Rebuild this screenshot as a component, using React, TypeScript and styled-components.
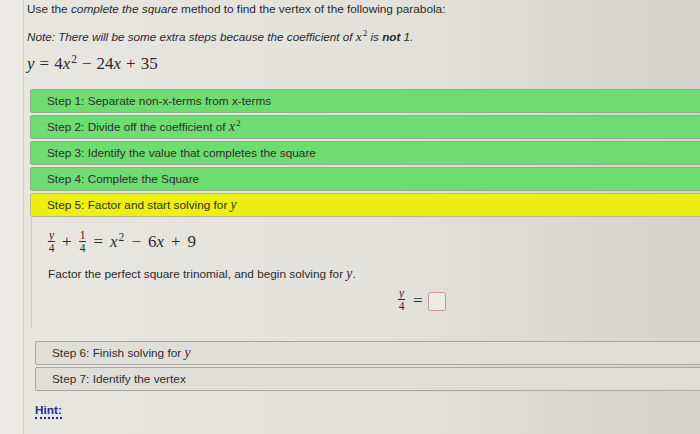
import React from "react";
import styled, { createGlobalStyle } from "styled-components";

const Global = createGlobalStyle`
  html, body { margin: 0; padding: 0; }
  body {
    width: 700px;
    height: 434px;
    overflow: hidden;
    background: #e4e2dd;
    font-family: "Liberation Sans", Arial, sans-serif;
    color: #2a2a2a;
  }
`;

const Page = styled.div`
  height: 434px;
  background: linear-gradient(90deg, #e8e6e1 0%, #e3e1dc 55%, #d6d2cc 100%);
  display: flex;
`;

const Gutter = styled.div`
  width: 23px;
  flex: none;
  border-right: 1px solid #cfccc6;
  background: rgba(255, 255, 255, 0.18);
`;

const Main = styled.div`
  flex: 1;
  padding: 0 0 0 3px;
  margin-right: -12px;
  display: flex;
  flex-direction: column;
`;

const Prompt = styled.p`
  margin: 0;
  font-size: 11.8px;
  line-height: 18px;
`;

const Note = styled.p`
  margin: 10px 0 0 0;
  font-size: 11.7px;
  line-height: 18px;
  font-style: italic;
`;

const Math = styled.span`
  font-family: "Liberation Serif", "Times New Roman", serif;
  font-style: italic;
  font-size: 1.15em;
`;

const Sup = styled.sup`
  font-size: 0.68em;
  font-style: normal;
  line-height: 0;
  vertical-align: 0.55em;
  margin-left: 1px;
`;

const Bold = styled.b`
  font-weight: bold;
`;

const Equation = styled.div`
  margin: 7px 0 0 0;
  font-family: "Liberation Serif", "Times New Roman", serif;
  font-size: 17px;
  line-height: 22px;
  white-space: nowrap;
`;

const Op = styled.span<{ $wide?: boolean }>`
  font-style: normal;
  padding: 0 ${(p) => (p.$wide ? 7 : 5)}px;
`;

const It = styled.span`
  font-style: italic;
`;

const Steps = styled.div`
  margin-top: 14px;
  margin-left: 3px;
  display: flex;
  flex-direction: column;
  gap: 2px;
`;

const StepBar = styled.div<{ $tone: "green" | "yellow" | "gray" }>`
  height: 24px;
  box-sizing: border-box;
  display: flex;
  align-items: center;
  padding-left: 16px;
  font-size: 11.8px;
  border-radius: 2px;
  color: #2e2e2e;
  background: ${(p) =>
    p.$tone === "green" ? "#6edc70" : p.$tone === "yellow" ? "#eeee12" : "#e0ded9"};
  border: 1px solid
    ${(p) => (p.$tone === "green" ? "#93ac8c" : p.$tone === "yellow" ? "#b8b88a" : "#a9a7a2")};
`;

const Panel = styled.div`
  margin-left: 4px;
  margin-top: -2px;
  border-left: 1px solid #d0cdc7;
  padding: 16px 0 0 16px;
  height: 114px;
  box-sizing: border-box;
  display: flex;
  flex-direction: column;
`;

const WorkLine = styled.div`
  font-family: "Liberation Serif", "Times New Roman", serif;
  font-size: 17px;
  line-height: 22px;
  white-space: nowrap;
`;

const Frac = styled.span`
  display: inline-flex;
  flex-direction: column;
  align-items: center;
  font-size: 11.5px;
  line-height: 10px;
  vertical-align: middle;
  position: relative;
  top: -2px;
`;

const Num = styled.span`
  padding: 0 1px 1px;
  border-bottom: 1px solid #333;
`;

const Den = styled.span`
  padding-top: 1px;
`;

const Instruction = styled.p`
  margin: 11px 0 0 0;
  font-size: 11.8px;
  line-height: 16px;
`;

const AnswerRow = styled.div`
  margin: 8px 0 0 350px;
  font-family: "Liberation Serif", "Times New Roman", serif;
  font-size: 17px;
  line-height: 22px;
  white-space: nowrap;
`;

const AnswerBox = styled.span`
  display: inline-block;
  width: 16px;
  height: 17px;
  vertical-align: middle;
  border: 1.5px solid #c79a98;
  border-radius: 3px;
  background: #eeebe7;
`;

const EqOp = styled.span`
  padding: 0 5px 0 8px;
`;

const LowerSteps = styled.div`
  margin-top: 12px;
  margin-left: 8px;
  display: flex;
  flex-direction: column;
  gap: 2px;
`;

const Hint = styled.span`
  margin: 13px 0 0 8px;
  align-self: flex-start;
  font-size: 11.8px;
  font-weight: bold;
  color: #27279a;
  border-bottom: 2px dotted #27279a;
  line-height: 13px;
`;

const steps: { label: React.ReactNode; tone: "green" | "yellow" }[] = [
  { label: "Step 1: Separate non-x-terms from x-terms", tone: "green" },
  {
    label: (
      <>
        Step 2: Divide off the coefficient of&nbsp;
        <Math>
          x<Sup>2</Sup>
        </Math>
      </>
    ),
    tone: "green",
  },
  { label: "Step 3: Identify the value that completes the square", tone: "green" },
  { label: "Step 4: Complete the Square", tone: "green" },
  {
    label: (
      <>
        Step 5: Factor and start solving for&nbsp;<Math>y</Math>
      </>
    ),
    tone: "yellow",
  },
];

export default function App() {
  return (
    <>
      <Global />
      <Page>
        <Gutter />
        <Main>
          <Prompt>
            Use the <i>complete the square</i> method to find the vertex of the following parabola:
          </Prompt>
          <Note>
            Note: There will be some extra steps because the coefficient of{" "}
            <Math>
              x<Sup>2</Sup>
            </Math>{" "}
            is <Bold>not</Bold> 1.
          </Note>
          <Equation>
            <It>y</It>
            <Op>=</Op>4<It>x</It>
            <Sup>2</Sup>
            <Op>&minus;</Op>24<It>x</It>
            <Op>+</Op>35
          </Equation>
          <Steps>
            {steps.map((s, i) => (
              <StepBar key={i} $tone={s.tone}>
                {s.label}
              </StepBar>
            ))}
          </Steps>
          <Panel>
            <WorkLine>
              <Frac>
                <Num>
                  <It>y</It>
                </Num>
                <Den>4</Den>
              </Frac>
              <Op $wide>+</Op>
              <Frac>
                <Num>1</Num>
                <Den>4</Den>
              </Frac>
              <Op $wide>=</Op>
              <It>x</It>
              <Sup>2</Sup>
              <Op $wide>&minus;</Op>6<It>x</It>
              <Op $wide>+</Op>9
            </WorkLine>
            <Instruction>
              Factor the perfect square trinomial, and begin solving for <Math>y</Math>.
            </Instruction>
            <AnswerRow>
              <Frac>
                <Num>
                  <It>y</It>
                </Num>
                <Den>4</Den>
              </Frac>
              <EqOp>=</EqOp>
              <AnswerBox />
            </AnswerRow>
          </Panel>
          <LowerSteps>
            <StepBar $tone="gray">
              Step 6: Finish solving for&nbsp;<Math>y</Math>
            </StepBar>
            <StepBar $tone="gray">Step 7: Identify the vertex</StepBar>
          </LowerSteps>
          <Hint>Hint:</Hint>
        </Main>
      </Page>
    </>
  );
}
